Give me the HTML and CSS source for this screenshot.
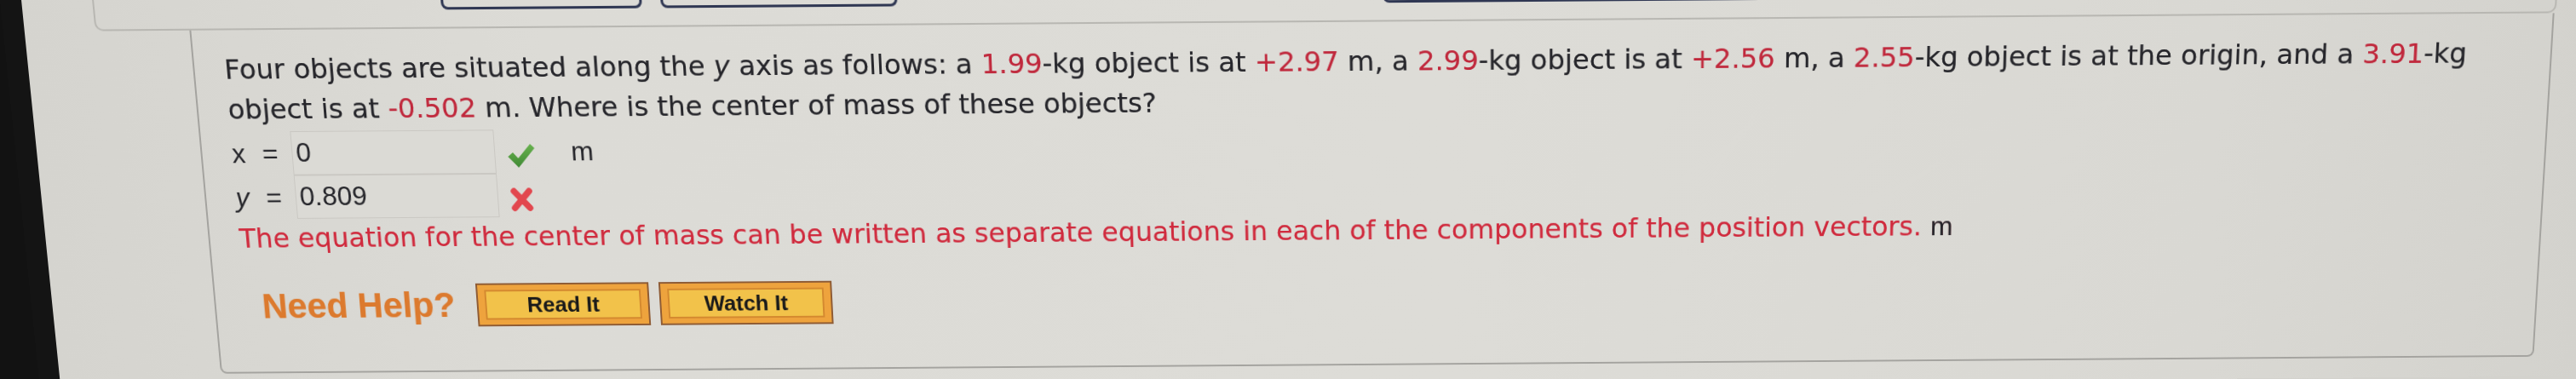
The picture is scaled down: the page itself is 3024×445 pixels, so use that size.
FILE: index.html
```html
<!DOCTYPE html>
<html lang="en">
<head>
<meta charset="utf-8">
<title>Center of mass question</title>
<link rel="stylesheet" href="styles.css">
</head>
<body>
<div class="screen">
  <div class="bezel"></div>
  <div class="page">
    <div class="toppanel">
      <span class="tab tab-a"></span>
      <span class="tab tab-b"></span>
      <span class="tab tab-c"></span>
    </div>
    <div class="card">
      <p class="question">Four objects are situated along the <i>y</i> axis as follows: a <span class="num">1.99</span>-kg object is at <span class="num">+2.97</span> m, a <span class="num">2.99</span>-kg object is at <span class="num">+2.56</span> m, a <span class="num">2.55</span>-kg object is at the origin, and a <span class="num">3.91</span>-kg object is at <span class="num">-0.502</span> m. Where is the center of mass of these objects?</p>
      <div class="answers">
        <div class="row">
          <span class="label">x <span class="eq">=</span></span>
          <span class="box">0</span>
          <svg class="mark check" viewBox="0 0 34 32" aria-hidden="true">
            <defs>
              <linearGradient id="g" x1="0" y1="0" x2="0" y2="1">
                <stop offset="0" stop-color="#69b24e"/>
                <stop offset="1" stop-color="#3f8934"/>
              </linearGradient>
            </defs>
            <polygon points="1,17 7,12 13,19 28,2 33,7 13,30" fill="url(#g)"/>
          </svg>
          <span class="unit">m</span>
        </div>
        <div class="row">
          <span class="label"><i>y</i> <span class="eq">=</span></span>
          <span class="box">0.809</span>
          <svg class="mark cross" viewBox="0 0 30 32" aria-hidden="true">
            <path d="M6 6 L24 26 M24 6 L6 26" stroke="#e2474e" stroke-width="7.5" stroke-linecap="round" fill="none"/>
          </svg>
        </div>
      </div>
      <p class="feedback">The equation for the center of mass can be written as separate equations in each of the components of the position vectors. <span class="unit-inline">m</span></p>
      <div class="help">
        <span class="need">Need Help?</span>
        <button class="btn" type="button"><span class="btn-in">Read It</span></button>
        <button class="btn" type="button"><span class="btn-in">Watch It</span></button>
      </div>
    </div>
  </div>
</div>
</body>
</html>
```

FILE: styles.css
```css
html {
  margin: 0;
  height: 445px;
  overflow: hidden;
  background: linear-gradient(to right, #121212 0, #121212 50%, #d3d2cd 50%, #d3d2cd 100%);
}

body {
  margin: 0;
  height: 445px;
  overflow: hidden;
  font-family: "DejaVu Sans", Verdana, sans-serif;
  color: #26262b;
}

.screen {
  width: 3060px;
  height: 470px;
  display: flex;
  transform-origin: 0 0;
  transform: rotate(-0.42deg) matrix3d(1, 0, 0, 0, 0.0967, 1.0122, 0, 0.000055, 0, 0, 1, 0, 0, 0, 0, 1);
}

.bezel {
  width: 25px;
  flex-shrink: 0;
  background: #141414;
}

.page {
  flex: 1;
  display: flex;
  flex-direction: column;
  background: linear-gradient(to right, #d5d4cf 0, #dcdbd6 20%, #dddcd7 55%, #d9d8d3 85%, #d3d2cd 100%);
}

.toppanel {
  margin-left: 83px;
  width: 2895px;
  height: 37px;
  flex-shrink: 0;
  box-sizing: border-box;
  border: 2px solid #b8b7b2;
  border-top: none;
  border-radius: 0 0 10px 10px;
  display: flex;
  align-items: flex-start;
}

.tab {
  display: block;
  height: 15px;
  box-sizing: border-box;
  border: 3px solid #2f3753;
  border-top: none;
  border-radius: 0 0 8px 8px;
}

.tab-a { margin-left: 407px; width: 236px; }
.tab-b { margin-left: 22px; width: 278px; }
.tab-c { margin-left: 570px; width: 445px; }

.card {
  margin-left: 194px;
  width: 2782px;
  height: 409px;
  flex-shrink: 0;
  box-sizing: border-box;
  border: 2px solid #a4a39f;
  border-top: none;
  border-radius: 0 0 8px 8px;
  padding: 23px 63px 0 35px;
}

.question {
  margin: 0;
  font-size: 32.4px;
  line-height: 47px;
  text-shadow: 0 0 0.6px rgba(38, 38, 43, 0.55);
}

.question i {
  font-style: oblique;
}

.num {
  color: #c0283c;
  text-shadow: 0 0 0.6px rgba(192, 40, 60, 0.5);
}

.answers {
  margin-top: 2px;
  display: flex;
  flex-direction: column;
  font-family: "Liberation Sans", Arial, sans-serif;
  font-size: 32px;
}

.row {
  display: flex;
  align-items: flex-start;
  height: 52px;
}

.label {
  width: 71px;
  flex-shrink: 0;
  line-height: 52px;
  white-space: nowrap;
}

.eq {
  margin-left: 11px;
}

.box {
  width: 241px;
  height: 52px;
  box-sizing: border-box;
  border: 1px solid #cac8c3;
  background: #dbdad5;
  padding: 0 0 0 4px;
  line-height: 49px;
}

.mark {
  width: 34px;
  height: 32px;
  margin-top: 15px;
  margin-left: 14px;
  flex-shrink: 0;
}

.cross {
  width: 30px;
  margin-left: 13px;
}

.unit {
  margin-left: 42px;
  line-height: 52px;
}

.feedback {
  margin: 0;
  font-size: 32.1px;
  line-height: 47px;
  color: #d02a3d;
  text-shadow: 0 0 0.6px rgba(208, 42, 61, 0.5);
}

.unit-inline {
  color: #26262b;
  font-family: "Liberation Sans", Arial, sans-serif;
  font-size: 32px;
}

.help {
  margin-top: 32px;
  display: flex;
  align-items: center;
  gap: 12px;
}

.need {
  margin-left: 20px;
  margin-right: 14px;
  font-family: "Liberation Sans", Arial, sans-serif;
  font-weight: bold;
  font-size: 42px;
  color: #dc7a2e;
  text-shadow: 0 0 1px rgba(220, 122, 46, 0.6);
}

.btn {
  width: 207px;
  height: 52px;
  box-sizing: border-box;
  margin: 0;
  padding: 6px 8px;
  border: 2px solid #8e5b34;
  background: #eea33d;
  display: flex;
  font: inherit;
}

.btn-in {
  flex: 1;
  box-sizing: border-box;
  border: 2px solid #d4892f;
  background: #f2c24a;
  display: flex;
  align-items: center;
  justify-content: center;
  font-family: "Liberation Sans", Arial, sans-serif;
  font-weight: bold;
  font-size: 26px;
  color: #1a1a1a;
}
```
